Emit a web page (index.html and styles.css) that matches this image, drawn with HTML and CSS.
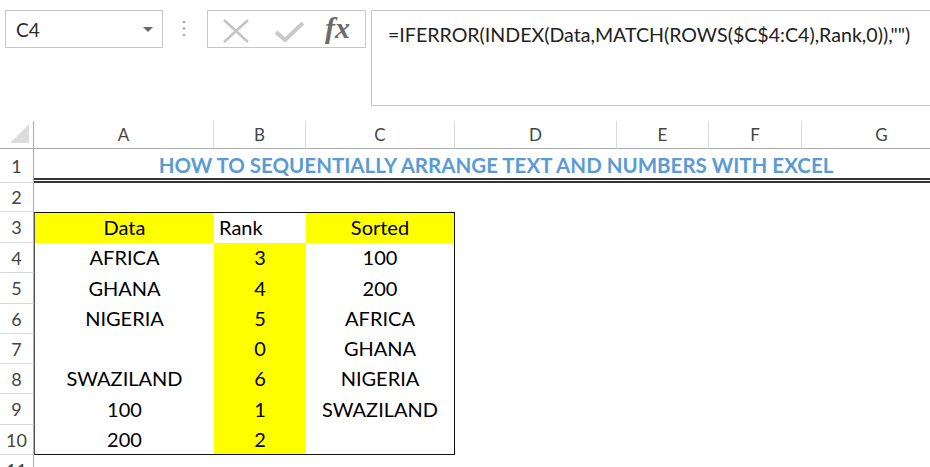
FILE: index.html
```html
<!DOCTYPE html>
<html>
<head>
<meta charset="utf-8">
<link rel="stylesheet" href="styles.css">
</head>
<body>
<div class="app">
  <div class="fbar">
    <div class="namebox">
      <span class="nb-text">C4</span>
      <svg class="nb-arrow" width="10" height="6" viewBox="0 0 10 6"><polygon points="0,0 10,0 5,5" fill="#6a6a6a"/></svg>
    </div>
    <div class="grip">
      <svg width="4" height="18" viewBox="0 0 4 18"><circle cx="2" cy="2" r="1.3" fill="#a8a8a8"/><circle cx="2" cy="8.5" r="1.3" fill="#a8a8a8"/><circle cx="2" cy="15" r="1.3" fill="#a8a8a8"/></svg>
    </div>
    <div class="fxbox">
      <svg class="ico-x" width="28" height="26" viewBox="0 0 28 26"><path d="M2 2 L26 24 M26 2 L2 24" stroke="#c4c4c4" stroke-width="2.6" fill="none"/></svg>
      <svg class="ico-check" width="32" height="24" viewBox="0 0 32 24"><path d="M2 12 L11 20 L29 3" stroke="#c9c9c9" stroke-width="4" fill="none" stroke-linejoin="miter"/></svg>
      <span class="ico-fx">fx</span>
    </div>
    <div class="formula">=IFERROR(INDEX(Data,MATCH(ROWS($C$4:C4),Rank,0)),"")</div>
  </div>

  <div class="sheet">
    <div class="corner"><svg width="19" height="19" viewBox="0 0 19 19"><polygon points="19,0 19,19 0,19" fill="#dcdcdc"/></svg></div>
    <div class="ch">A</div>
    <div class="ch">B</div>
    <div class="ch">C</div>
    <div class="ch">D</div>
    <div class="ch">E</div>
    <div class="ch">F</div>
    <div class="ch">G</div>

    <div class="rh">1</div>
    <div class="title">HOW TO SEQUENTIALLY ARRANGE TEXT AND NUMBERS WITH EXCEL</div>

    <div class="rh">2</div>
    <div class="blank span7"></div>

    <div class="rh">3</div>
    <div class="c ca top yel">Data</div>
    <div class="c cb top left-al">Rank</div>
    <div class="c cc top yel">Sorted</div>
    <div class="blank span4"></div>

    <div class="rh">4</div>
    <div class="c ca">AFRICA</div>
    <div class="c cb yel">3</div>
    <div class="c cc">100</div>
    <div class="blank span4"></div>

    <div class="rh">5</div>
    <div class="c ca">GHANA</div>
    <div class="c cb yel">4</div>
    <div class="c cc">200</div>
    <div class="blank span4"></div>

    <div class="rh">6</div>
    <div class="c ca">NIGERIA</div>
    <div class="c cb yel">5</div>
    <div class="c cc">AFRICA</div>
    <div class="blank span4"></div>

    <div class="rh">7</div>
    <div class="c ca"></div>
    <div class="c cb yel">0</div>
    <div class="c cc">GHANA</div>
    <div class="blank span4"></div>

    <div class="rh">8</div>
    <div class="c ca">SWAZILAND</div>
    <div class="c cb yel">6</div>
    <div class="c cc">NIGERIA</div>
    <div class="blank span4"></div>

    <div class="rh">9</div>
    <div class="c ca">100</div>
    <div class="c cb yel">1</div>
    <div class="c cc">SWAZILAND</div>
    <div class="blank span4"></div>

    <div class="rh">10</div>
    <div class="c ca bot">200</div>
    <div class="c cb yel bot">2</div>
    <div class="c cc bot"></div>
    <div class="blank span4"></div>

    <div class="rh rh-last">11</div>
    <div class="blank span7"></div>
  </div>
</div>
</body>
</html>
```

FILE: styles.css
```css
* { box-sizing: border-box; }
html, body {
  margin: 0;
  padding: 0;
  background: #ffffff;
  overflow: hidden;
}
body {
  width: 930px;
  height: 467px;
  font-family: Lato, "Open Sans", sans-serif;
  color: #000;
}
.app {
  width: 930px;
  height: 467px;
  overflow: hidden;
}

/* formula bar */
.fbar {
  display: flex;
  align-items: flex-start;
  padding-top: 10px;
  height: 121px;
  width: 980px;
}
.fbar > * { flex-shrink: 0; }
.namebox {
  margin-left: 5px;
  width: 158px;
  height: 38px;
  border: 1px solid #c6c6c6;
  display: flex;
  align-items: center;
  justify-content: space-between;
  padding: 0 9px 0 10px;
}
.nb-text {
  font-size: 19px;
  color: #2b2b2b;
}
.nb-arrow { margin-top: 1px; }
.grip {
  width: 44px;
  height: 38px;
  display: flex;
  align-items: center;
  justify-content: center;
  padding-right: 2px;
}
.fxbox {
  width: 159px;
  height: 38px;
  border: 1px solid #c6c6c6;
  display: flex;
  align-items: center;
  padding-left: 14px;
}
.ico-x { margin-top: 3px; }
.ico-check { margin-left: 24px; margin-top: 6px; }
.ico-fx {
  margin-left: 19px;
  font-family: "Liberation Serif", "DejaVu Serif", serif;
  font-style: italic;
  font-weight: bold;
  font-size: 30px;
  color: #6b6b6b;
  line-height: 1;
  margin-top: -2px;
}
.formula {
  margin-left: 5px;
  width: 590px;
  height: 96px;
  border: 1px solid #c6c6c6;
  border-right: none;
  padding: 12px 0 0 16px;
  font-size: 19.6px;
  color: #222;
  white-space: nowrap;
}

/* sheet grid */
.sheet {
  display: grid;
  grid-template-columns: 34px 180px 92px 149px 162px 92px 93px 160px;
  grid-template-rows: 28px 34px 29px 31px 30px 31px 30px 30px 30px 31px 30px 30px;
  width: 962px;
}
.corner {
  border-right: 1px solid #ababab;
  border-bottom: 1px solid #ababab;
  display: flex;
  align-items: flex-end;
  justify-content: flex-end;
  padding: 0 4px 5px 0;
}
.ch {
  border-right: 1px solid #dadada;
  border-bottom: 1px solid #ababab;
  display: flex;
  align-items: center;
  justify-content: center;
  font-size: 17px;
  color: #444;
}
.rh {
  border-right: 1px solid #ababab;
  border-bottom: 1px solid #dadada;
  display: flex;
  align-items: center;
  justify-content: center;
  font-size: 18px;
  color: #444;
}
.title {
  grid-column: 2 / span 7;
  border-bottom: 5px double #333;
  display: flex;
  align-items: center;
  justify-content: center;
  font-weight: bold;
  font-size: 20.5px;
  color: #5b9bd5;
  padding-top: 2px;
  padding-right: 4px;
  white-space: nowrap;
}
.span7 { grid-column: 2 / span 7; }
.span4 { grid-column: 5 / span 4; }
.c {
  display: flex;
  align-items: center;
  justify-content: center;
  font-size: 20px;
  padding-bottom: 2px;
  white-space: nowrap;
}
.ca { border-left: 1px solid #555; }
.cc { border-right: 1px solid #111; }
.top { border-top: 1px solid #111; }
.bot { border-bottom: 1px solid #111; }
.yel { background: #ffff00; }
.left-al {
  justify-content: flex-start;
  padding-left: 5px;
}
```
